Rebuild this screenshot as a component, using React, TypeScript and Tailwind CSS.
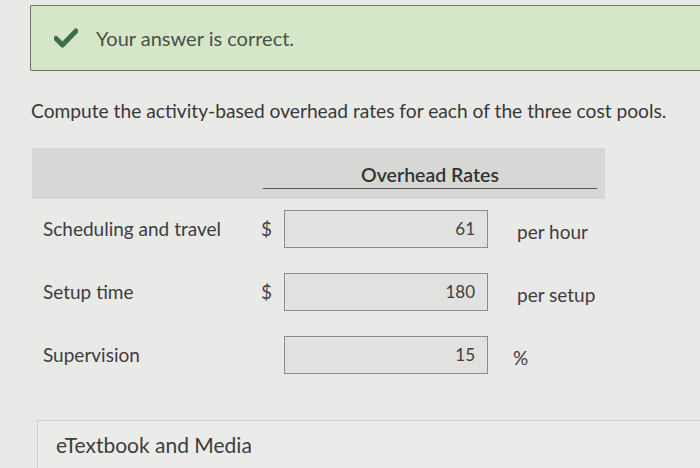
const rows = [
  { label: "Scheduling and travel", dollar: true, value: "61", unit: "per hour" },
  { label: "Setup time", dollar: true, value: "180", unit: "per setup" },
  { label: "Supervision", dollar: false, value: "15", unit: "%" },
]

const CheckIcon = () => (
  <svg width="24" height="20" viewBox="0 0 24 20" className="shrink-0">
    <path d="M2 10.5 L8.5 17 L22 3" fill="none" stroke="#3f6d50" strokeWidth="5" strokeLinecap="round" strokeLinejoin="round" />
  </svg>
)

export default function App() {
  return (
    <div
      className="relative h-[468px] w-[700px] overflow-hidden bg-[#e9e9e7] text-[#3b3b3b]"
      style={{ fontFamily: "Lato, 'Open Sans', sans-serif" }}
    >
      <div className="ml-[30px] mt-[5px] flex h-[66px] w-[700px] items-center gap-[18px] rounded-l-[2px] border-y border-l border-[#5e7d62] bg-[#d5e7c7] pl-[23px]">
        <CheckIcon />
        <span className="text-[20px] text-[#4b504b]">Your answer is correct.</span>
      </div>

      <p className="ml-[31px] mt-[26px] text-[19.2px] text-[#383838]">
        Compute the activity-based overhead rates for each of the three cost pools.
      </p>

      <div className="ml-[32px] mt-[22px] flex h-[51px] w-[573px] items-end bg-[#d7d7d5] pb-[10px]">
        <div className="ml-[231px] w-[334px] border-b border-[#555] text-center text-[19.5px] leading-[26px] font-semibold text-[#333]">
          Overhead Rates
        </div>
      </div>

      <div className="mt-[11px] flex flex-col gap-[25px]">
        {rows.map((r) => (
          <div key={r.label} className="flex h-[38px] items-center">
            <span className="ml-[43px] w-[218px] text-[19px] text-[#3d3d3d]">{r.label}</span>
            <span className="w-[23px] text-[19px] text-[#444]">{r.dollar ? "$" : ""}</span>
            <div className="flex h-[38px] w-[204px] items-center justify-end border border-[#8c8c8a] bg-[#e1e1df] pr-[12px] text-[17px] text-[#3d3d3d]">
              {r.value}
            </div>
            <span className={`${r.unit === "%" ? "ml-[25px]" : "ml-[29px]"} pt-[6px] text-[19px] text-[#3d3d3d]`}>{r.unit}</span>
          </div>
        ))}
      </div>

      <div className="ml-[37px] mt-[46px] flex h-[60px] w-[700px] items-start border-l border-t border-[#cfcfcd] bg-[#ebebe9] pl-[18px] pt-[8px]">
        <span className="text-[21px] text-[#3d3d3d]">eTextbook and Media</span>
      </div>
    </div>
  )
}
